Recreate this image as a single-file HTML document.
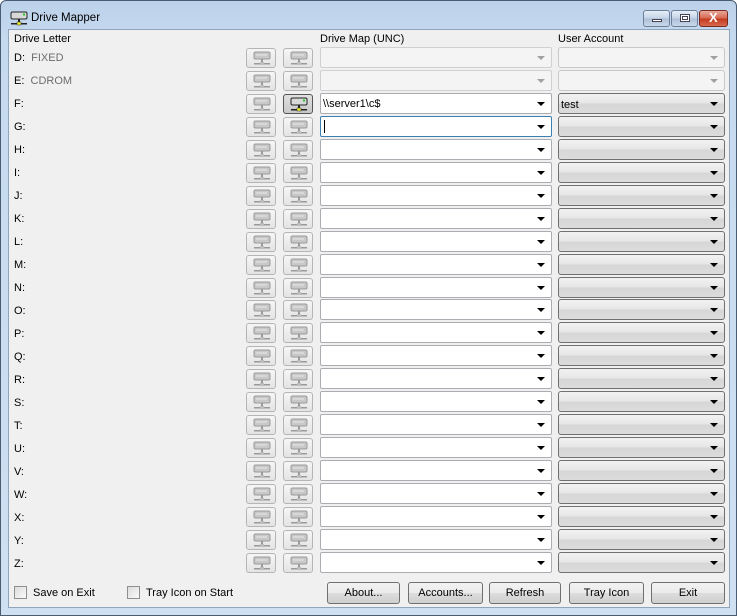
<!DOCTYPE html>
<html><head><style>
*{box-sizing:border-box;margin:0;padding:0}
body{width:737px;height:616px;overflow:hidden;font-family:"Liberation Sans",sans-serif;font-size:11px;background:#fff}
.win{position:absolute;left:0;top:0;width:737px;height:616px;background:linear-gradient(#bcd2ea,#c6daef 40px,#cfe0f2);border:1px solid #4a5c72;border-radius:6px 6px 0 0}
.title{position:absolute;left:30px;top:11px;font-size:11.5px;color:#000}
.client{position:absolute;left:8px;top:29px;width:722px;height:579px;background:#f0f0f0;border:1px solid #8fa5bd}
.a{position:absolute}
.lbl{position:absolute;left:14px;color:#000;font-size:11px}
.dis{color:#6d6d6d}
.btn{position:absolute;width:30px;height:20px;border:1px solid #b5b5b5;border-radius:3px;background:linear-gradient(#f6f6f6,#e4e4e4)}
.btn svg{position:absolute;left:6px;top:2px}
.cb{position:absolute;left:320px;width:232px;height:21px;background:#fff;border:1px solid #abadb3;border-radius:2px}
.ua{position:absolute;left:558px;width:167px;height:21px;border:1px solid #707070;border-radius:3px;background:linear-gradient(#f2f2f2,#e6e6e6 50%,#d6d6d6 51%,#dcdcdc)}
.ar{position:absolute;right:6px;top:8px;width:0;height:0;border-left:4px solid transparent;border-right:4px solid transparent;border-top:4px solid #000}
.d .ar{border-top-color:#a0a0a0}
.cb.d{background:#f4f4f4;border-color:#d0d0d0}
.ua.d{background:#f4f4f4;border-color:#c8c8c8}
.pb{position:absolute;top:582px;height:22px;border:1px solid #707070;border-radius:3px;background:linear-gradient(#f2f2f2,#ebebeb 50%,#dddddd 51%,#cfcfcf);text-align:center;line-height:20px;font-size:11px}
.chk{position:absolute;top:586px;width:13px;height:13px;border:1px solid #8e8f8f;background:linear-gradient(135deg,#dcdcdc,#fafafa)}
.wb{position:absolute;top:9px;height:17px;border:1px solid #6d7f98;border-radius:3px;background:linear-gradient(#e6eef8,#c4d3e6 50%,#aebfd6 51%,#c8d8ec)}
</style></head><body>
<svg width="0" height="0" style="position:absolute"><defs>
<symbol id="ic" viewBox="0 0 18 16"><rect x="1" y="1" width="16" height="7" rx="1.5" fill="#c8c8c8" stroke="#9a9a9a"/><rect x="3" y="3.5" width="11" height="1" fill="#e8e8e8"/><rect x="8" y="8" width="2" height="4" fill="#9a9a9a"/><rect x="1" y="12" width="16" height="1.5" fill="#9a9a9a"/><rect x="7" y="11" width="4" height="3" fill="#bdbdbd"/></symbol>
<symbol id="ic2" viewBox="0 0 18 16"><rect x="1" y="1" width="16" height="7" rx="1.5" fill="#d8d8d8" stroke="#222"/><rect x="13" y="2.5" width="2" height="2" fill="#2c2"/><rect x="8" y="8" width="2" height="4" fill="#222"/><rect x="1" y="12" width="16" height="1.5" fill="#222"/><rect x="7" y="11" width="4" height="3" fill="#ee3"  stroke="#333" stroke-width=".5"/></symbol>
</defs></svg>
<div class="win">
<svg class="a" style="left:9px;top:10px" width="18" height="16"><use href="#ic2"/></svg>
<div class="title">Drive Mapper</div>
<div class="wb" style="left:642px;width:27px"><div class="a" style="left:8px;top:8px;width:10px;height:3px;background:#fff;border:1px solid #445"></div></div>
<div class="wb" style="left:670px;width:27px"><div class="a" style="left:8px;top:3px;width:10px;height:8px;border:1px solid #445;background:#fff;box-shadow:inset 0 0 0 1px #fff,inset 0 0 0 2px #445"></div></div>
<div class="wb" style="left:698px;width:29px;border-color:#7a2a1e;background:linear-gradient(#e8a89a,#d6674f 50%,#c2391d 51%,#d86a4e)"><div class="a" style="left:9px;top:-1px;color:#fff;font-weight:bold;font-size:13px">X</div></div>
</div>
<div class="client"></div>
<div class="lbl" style="top:33px">Drive Letter</div>
<div class="lbl" style="left:320px;top:33px">Drive Map (UNC)</div>
<div class="lbl" style="left:558px;top:33px">User Account</div>

<div id="rows">
<div class="lbl" style="top:52px">D: <span class="dis">&nbsp;FIXED</span></div>
<div class="lbl" style="top:75px">E: <span class="dis">&nbsp;CDROM</span></div>
<div class="lbl" style="top:98px">F:</div>
<div class="lbl" style="top:121px">G:</div>
<div class="lbl" style="top:144px">H:</div>
<div class="lbl" style="top:167px">I:</div>
<div class="lbl" style="top:190px">J:</div>
<div class="lbl" style="top:213px">K:</div>
<div class="lbl" style="top:236px">L:</div>
<div class="lbl" style="top:259px">M:</div>
<div class="lbl" style="top:282px">N:</div>
<div class="lbl" style="top:305px">O:</div>
<div class="lbl" style="top:328px">P:</div>
<div class="lbl" style="top:351px">Q:</div>
<div class="lbl" style="top:374px">R:</div>
<div class="lbl" style="top:397px">S:</div>
<div class="lbl" style="top:420px">T:</div>
<div class="lbl" style="top:443px">U:</div>
<div class="lbl" style="top:466px">V:</div>
<div class="lbl" style="top:489px">W:</div>
<div class="lbl" style="top:512px">X:</div>
<div class="lbl" style="top:535px">Y:</div>
<div class="lbl" style="top:558px">Z:</div>
</div>
<div id="ctl"></div>
<script>
var h='';
for(var i=0;i<23;i++){var y=48+Math.round(i*22.95);
var d=i<2?' d':'';
h+='<div class="btn" style="left:246px;top:'+y+'px"><svg width="18" height="16"><use href="#ic"/></svg></div>';
h+='<div class="btn" style="left:283px;top:'+y+'px'+(i==2?';border-color:#555;background:linear-gradient(#e0e0e0,#c8c8c8)':'')+'"><svg width="18" height="16"><use href="#'+(i==2?'ic2':'ic')+'"/></svg></div>';
h+='<div class="cb'+d+'" style="top:'+(y-1)+'px'+(i==3?';border-color:#3c7fb1':'')+'">'+(i==3?'<div class="a" style="left:3px;top:3px;width:1px;height:13px;background:#000"></div>':'')+'<div class="ar"></div></div>';
h+='<div class="ua'+d+'" style="top:'+(y-1)+'px"><div class="ar"></div></div>';}
document.getElementById('ctl').innerHTML=h;
</script>
<div class="a" style="left:323px;top:98px">\\server1\c$</div>
<div class="a" style="left:561px;top:99px">test</div>
<div class="chk" style="left:14px"></div><div class="a" style="left:33px;top:587px">Save on Exit</div>
<div class="chk" style="left:127px"></div><div class="a" style="left:146px;top:587px">Tray Icon on Start</div>
<div class="pb" style="left:327px;width:73px">About...</div>
<div class="pb" style="left:408px;width:75px">Accounts...</div>
<div class="pb" style="left:489px;width:72px">Refresh</div>
<div class="pb" style="left:569px;width:75px">Tray Icon</div>
<div class="pb" style="left:651px;width:74px">Exit</div>
</body></html>
